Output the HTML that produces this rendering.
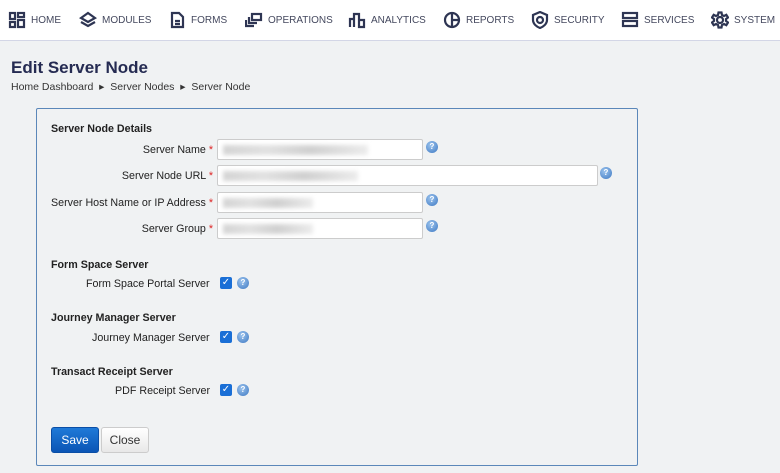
<!DOCTYPE html>
<html><head><style>
body{margin:0;width:780px;height:473px;background:#f0f2f3;font-family:"Liberation Sans",sans-serif;position:relative;overflow:hidden}
.nav{position:absolute;left:0;top:0;width:780px;height:40px;background:#fff;border-bottom:1px solid #d3d6e6}
.ni{position:absolute;top:11px;font-size:10px;color:#44485e;display:flex;align-items:center;gap:5px;height:18px}
.ni svg{width:18px;height:18px;fill:none;stroke:#2e3553;stroke-width:2.2}
h1{position:absolute;left:11px;top:58px;margin:0;font-size:17px;color:#252b52;font-weight:bold}
.bc{position:absolute;left:11px;top:81px;font-size:10.5px;color:#333}
.panel{position:absolute;left:36px;top:108px;width:600px;height:356px;border:1px solid #5b87b9;border-radius:2px}
.a{position:absolute;font-size:10.7px;color:#222}
.st{font-weight:bold}
.lbl{position:absolute;font-size:10.7px;color:#222;text-align:right;width:240px;left:-64px}
.lbl b{color:#d22;font-weight:normal}
.in{position:absolute;background:#fff;border:1px solid #ccc;border-radius:2px;height:19px;overflow:hidden}
.in i{position:absolute;left:5px;top:5px;height:10px;background:linear-gradient(90deg,#d4d4d4,#e2e2e2 30%,#d0d0d0 60%,#ececec);filter:blur(2px)}
.h{position:absolute;width:12px;height:12px;border-radius:50%;background:radial-gradient(circle at 40% 35%,#9cc4ee,#3d78c2);color:#fff;font-size:8px;font-weight:bold;text-align:center;line-height:12px}
.cb{position:absolute;width:12px;height:12px;background:#1a6fd6;border-radius:2px;color:#fff;font-size:10px;line-height:12px;text-align:center}
.btn{position:absolute;top:318px;height:24px;border-radius:3px;font-size:12px;line-height:24px;text-align:center}
</style></head><body>
<div class="nav">
<div class="ni" style="left:8px"><svg viewBox="0 0 18 18"><rect x="2" y="2" width="5" height="6"/><rect x="10" y="2" width="6" height="4"/><rect x="2" y="11" width="5" height="5"/><rect x="10" y="9" width="6" height="7"/></svg>HOME</div>
<div class="ni" style="left:79px"><svg viewBox="0 0 18 18"><path d="M9 2L16 7L9 11L2 7Z"/><path d="M2 11L9 15L16 11"/></svg>MODULES</div>
<div class="ni" style="left:168px"><svg viewBox="0 0 18 18"><path d="M4 2H11L15 6V16H4Z"/><path d="M7 10H12M7 13H12"/></svg>FORMS</div>
<div class="ni" style="left:245px"><svg viewBox="0 0 18 18"><rect x="7" y="3" width="9" height="6"/><path d="M4 6V12H12M1 9V15H9"/></svg>OPERATIONS</div>
<div class="ni" style="left:348px"><svg viewBox="0 0 18 18"><path d="M2 16V8H6V16M6 16V3H11V16M11 16V9H16V16Z"/></svg>ANALYTICS</div>
<div class="ni" style="left:443px"><svg viewBox="0 0 18 18"><circle cx="9" cy="9" r="7"/><path d="M9 2V16M9 9H16"/></svg>REPORTS</div>
<div class="ni" style="left:531px"><svg viewBox="0 0 18 18"><path d="M9 1L16 4V9C16 13 12 16 9 17C6 16 2 13 2 9V4Z"/><circle cx="9" cy="9" r="3"/></svg>SECURITY</div>
<div class="ni" style="left:621px"><svg viewBox="0 0 18 18"><rect x="2" y="2" width="14" height="5"/><rect x="2" y="10" width="14" height="5"/></svg>SERVICES</div>
<div class="ni" style="left:711px"><svg viewBox="0 0 18 18"><circle cx="9" cy="9" r="3"/><path d="M7.5 1.5H10.5L11 4L13 5L15.3 3.8L17 6.5L15 8V10L17 11.5L15.3 14.2L13 13L11 14L10.5 16.5H7.5L7 14L5 13L2.7 14.2L1 11.5L3 10V8L1 6.5L2.7 3.8L5 5L7 4Z"/></svg>SYSTEM</div>
</div>
<h1>Edit Server Node</h1>
<div class="bc">Home Dashboard &nbsp;▸&nbsp; Server Nodes &nbsp;▸&nbsp; Server Node</div>
<div class="panel">
<div class="a st" style="left:14px;top:14px">Server Node Details</div>
<div class="lbl" style="top:35px">Server Name <b>*</b></div>
<div class="in" style="left:180px;top:30px;width:204px"><i style="width:145px"></i></div>
<div class="h" style="left:389px;top:32px">?</div>
<div class="lbl" style="top:61px">Server Node URL <b>*</b></div>
<div class="in" style="left:180px;top:56px;width:379px"><i style="width:135px"></i></div>
<div class="h" style="left:563px;top:58px">?</div>
<div class="lbl" style="top:88px">Server Host Name or IP Address <b>*</b></div>
<div class="in" style="left:180px;top:83px;width:204px"><i style="width:90px"></i></div>
<div class="h" style="left:389px;top:85px">?</div>
<div class="lbl" style="top:114px">Server Group <b>*</b></div>
<div class="in" style="left:180px;top:109px;width:204px"><i style="width:90px"></i></div>
<div class="h" style="left:389px;top:111px">?</div>
<div class="a st" style="left:14px;top:150px">Form Space Server</div>
<div class="a" style="left:49px;top:169px">Form Space Portal Server</div>
<div class="cb" style="left:183px;top:168px">✓</div><div class="h" style="left:200px;top:168px">?</div>
<div class="a st" style="left:14px;top:203px">Journey Manager Server</div>
<div class="a" style="left:55px;top:223px">Journey Manager Server</div>
<div class="cb" style="left:183px;top:222px">✓</div><div class="h" style="left:200px;top:222px">?</div>
<div class="a st" style="left:14px;top:257px">Transact Receipt Server</div>
<div class="a" style="left:78px;top:276px">PDF Receipt Server</div>
<div class="cb" style="left:183px;top:275px">✓</div><div class="h" style="left:200px;top:275px">?</div>
<div class="btn" style="left:14px;width:46px;background:linear-gradient(#1f7ad8,#0b55b5);color:#fff;border:1px solid #0a4ea6">Save</div>
<div class="btn" style="left:64px;width:46px;background:linear-gradient(#fff,#e8e8e8);color:#333;border:1px solid #ccc">Close</div>
</div>
</body></html>
